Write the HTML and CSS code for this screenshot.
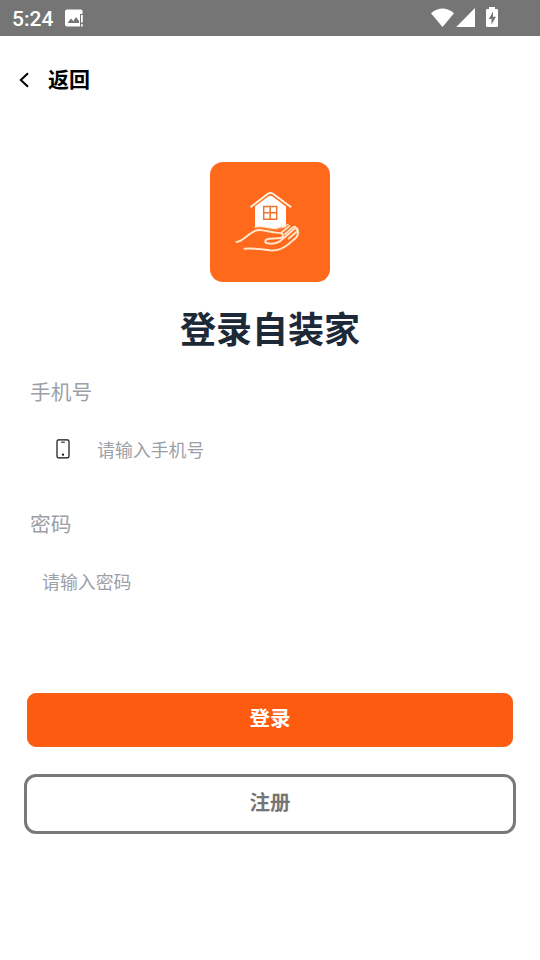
FILE: index.html
```html
<!DOCTYPE html>
<html lang="zh-CN">
<head>
<meta charset="utf-8">
<meta name="viewport" content="width=device-width, initial-scale=1">
<title>登录自装家</title>
<link rel="stylesheet" href="styles.css">
</head>
<body>
<header class="status">
  <span class="time">5:24</span>
  <svg class="shot" width="19" height="19" viewBox="0 0 19 19">
    <path fill="#fff" d="M2 .5h14q1.500 0 1.500 1.500V5H15v12.500H2q-2 0-2-2v-13q0-2 2-2z"/>
    <path fill="#757575" d="M2.500 14 6 9.500l2.300 2.700L11 8l3 4v2z"/>
    <path fill="#fff" d="M16 6h1.800v7.500H16zM16 15.300h1.800v2.200H16z"/>
  </svg>
  <svg class="signals" width="69" height="22" viewBox="0 0 69 22">
    <g fill="#fff">
      <path d="M0 6.200Q11.500-3 23 6.200L11.500 20z"/>
      <path d="M25.200 20 44 1v19z"/>
      <path d="M58 0h6v2h2q1 0 1 1v16q0 1-1 1H56q-1 0-1-1V3q0-1 1-1h2z"/>
    </g>
    <path fill="#757575" d="M62 4.500 57.800 12h2.700v5.500L65 9.800h-3z"/>
  </svg>
</header>
<nav class="back">
  <svg width="12" height="18" viewBox="0 0 12 18"><path d="M10 2.200 2.800 9l7.200 6.800" fill="none" stroke="#000" stroke-width="2"/></svg>
  <span>返回</span>
</nav>
<main>
  <svg class="logo" width="120" height="120" viewBox="0 0 120 120">
    <rect width="120" height="120" rx="13" fill="#ff691c"/>
    <path d="M45 44.500 58 34.500q2.300-1.500 4.600 0L76 44.500v20.500l-5 1.500Q66 69 60 66q-7-2-15-1z" fill="#fff"/>
    <path d="M40.500 45.200 57.500 32q2.900-2 5.800 0l17.900 13.200" fill="none" stroke="#fff2df" stroke-width="2"/>
    <path d="M53.700 44.500h13v12.700h-13zM60.200 44.500v12.700M53.700 50.800h13" fill="none" stroke="#f4732f" stroke-width="1.500"/>
    <g fill="none" stroke="#ffe6ca" stroke-width="2" stroke-linecap="round" stroke-linejoin="round">
      <path d="M26.500 80q4-.4 8-4 6-5 11-7.300c5-1.800 9 .2 14 .8 5 1.200 8 1 11 1.600 4 1.100 3 4.200-.3 4.900-3.500.8-9.500.1-12.500 1-3.300 1.100-3 3.900-.5 4.200 4.500.8 8.500 1 12.500-1.800l14.500-12.500c2-1.600 4.500.2 3 2.300l-8.500 7.300"/>
      <path d="M34.500 86.700c9-.6 17 .5 25 1.600 8 .9 13-1.500 17.500-5l8.500-7c3-3.500 3.500-7 1-9.700"/>
      <path d="m75 72 8-6.900q2.500-1.300 3 .8M71.500 70.500l8-6.500" stroke-width="1.700"/>
      <path stroke-width="1.200" d="M45 65.200c5-1.800 10 0 15 .8 6 .8 11 .3 18-3.500"/>
    </g>
    <path d="M46 66.600c6-.8 9 1.200 14 1.200 5 0 8-.7 12-2.300" fill="none" stroke="#ff7d38"/>
  </svg>
  <h1>登录自装家</h1>
  <form>
    <label for="phone">手机号</label>
    <div class="field phone">
      <svg width="14" height="20" viewBox="0 0 14 20"><rect x="1" y=".8" width="12" height="18.100" rx="1.600" fill="none" stroke="#111" stroke-width="1.200"/><path d="M5.200 3.200h3.600" stroke="#111"/><circle cx="7" cy="15.700" r="1.100" fill="#111"/></svg>
      <input id="phone" type="tel" placeholder="请输入手机号">
    </div>
    <label for="pass">密码</label>
    <div class="field">
      <input id="pass" type="password" placeholder="请输入密码">
    </div>
    <button class="login" type="button">登录</button>
    <button class="register" type="button">注册</button>
  </form>
</main>
</body>
</html>
```
FILE: styles.css
```css
* { box-sizing: border-box; }
body {
  margin: 0;
  height: 960px;
  overflow: hidden;
  background: #fff;
  font-family: "Noto Sans CJK SC", sans-serif;
}
svg { display: block; flex: none; }
.status {
  height: 36px;
  padding: 0 40px 0 12px;
  display: flex;
  align-items: center;
  background: #757575;
  color: #fff;
}
.time {
  width: 53px;
  font: 500 21px/36px Roboto, sans-serif;
  padding-top: 2px;
}
.signals { margin-left: auto; }
.back {
  height: 88px;
  padding-left: 18px;
  display: flex;
  align-items: center;
  gap: 18px;
  font-size: 21px;
  font-weight: 700;
  color: #000;
}
.back span { padding-bottom: 5px; }
main { padding: 38px 24px 0; }
.logo { margin: 0 auto; }
h1 {
  margin: 19px 0 0;
  font-size: 36px;
  line-height: 52px;
  text-align: center;
  color: #1e2937;
}
form { padding-top: 22px; }
label {
  display: block;
  padding-left: 6px;
  font-size: 20.700px;
  line-height: 32px;
  color: #9ca0a8;
}
.field {
  height: 60px;
  margin: 12px 0 28px;
  padding-left: 18px;
  display: flex;
  align-items: center;
}
.phone { padding-left: 32px; gap: 27px; }
input {
  flex: 1;
  min-width: 0;
  height: 60px;
  padding: 0 0 1px;
  border: 0;
  outline: 0;
  background: none;
  font: 17.900px "Noto Sans CJK SC", sans-serif;
}
input::placeholder { color: #9ca0a8; opacity: 1; }
button {
  display: block;
  padding: 0 0 6px;
  font: 700 20.500px/30px "Noto Sans CJK SC", sans-serif;
}
.login {
  width: 486px;
  height: 54px;
  margin: 82px 3px 27px;
  border: 1px solid #f0631e;
  border-radius: 9px;
  background: #fc5b10;
  color: #fff;
}
.register {
  width: 492px;
  height: 60px;
  border: 3px solid #797979;
  border-radius: 12px;
  background: #fff;
  color: #757575;
}
```
